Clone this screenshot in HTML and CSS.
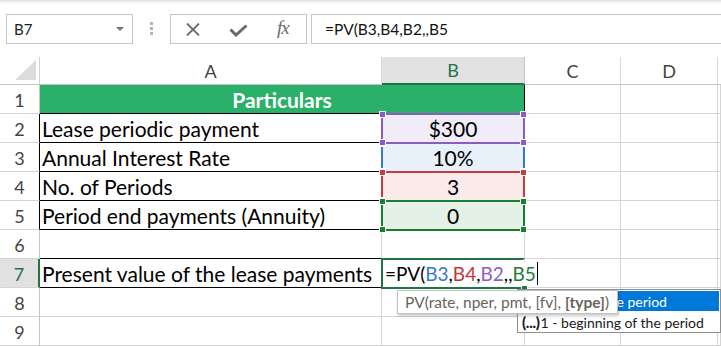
FILE: index.html
```html
<!DOCTYPE html>
<html>
<head>
<meta charset="utf-8">
<link rel="stylesheet" href="styles.css">
</head>
<body>
<div class="toolbar">
  <div class="namebox"><span>B7</span><span class="caret"></span></div>
  <div class="grip"><i></i><i></i><i></i></div>
  <div class="btns">
    <svg class="ico-x" width="14" height="13" viewBox="0 0 14 13"><path d="M1 0.5 L13 12.5 M13 0.5 L1 12.5" stroke="#6a6a6a" stroke-width="1.8" fill="none"/></svg>
    <svg class="ico-ok" width="19" height="13" viewBox="0 0 19 13"><path d="M1.5 5.5 L7 11 L17.5 1.5" stroke="#6a6a6a" stroke-width="3" fill="none"/></svg>
    <span class="fx">fx</span>
  </div>
  <div class="formula">=PV(B3,B4,B2,,B5</div>
</div>

<div class="sheet">
  <!-- header -->
  <div class="corner"><div class="tri"></div></div>
  <div class="ch">A</div>
  <div class="ch sel">B</div>
  <div class="ch">C</div>
  <div class="ch">D</div>
  <div class="ch end"></div>

  <!-- row 1 -->
  <div class="rh">1</div>
  <div class="c title">Particulars</div>
  <div class="c"></div><div class="c"></div><div class="c"></div>

  <!-- row 2 -->
  <div class="rh k">2</div>
  <div class="c a kb">Lease periodic payment</div>
  <div class="c b kb bg-purple">$300</div>
  <div class="c"></div><div class="c"></div><div class="c"></div>

  <!-- row 3 -->
  <div class="rh k">3</div>
  <div class="c a kb">Annual Interest Rate</div>
  <div class="c b kb bg-blue">10%</div>
  <div class="c"></div><div class="c"></div><div class="c"></div>

  <!-- row 4 -->
  <div class="rh k">4</div>
  <div class="c a kb">No. of Periods</div>
  <div class="c b kb bg-red">3</div>
  <div class="c"></div><div class="c"></div><div class="c"></div>

  <!-- row 5 -->
  <div class="rh k">5</div>
  <div class="c a kb">Period end payments (Annuity)</div>
  <div class="c b kb bg-green">0</div>
  <div class="c"></div><div class="c"></div><div class="c"></div>

  <!-- row 6 -->
  <div class="rh">6</div>
  <div class="c a kb"></div>
  <div class="c"></div>
  <div class="c"></div><div class="c"></div><div class="c"></div>

  <!-- row 7 -->
  <div class="rh sel">7</div>
  <div class="c a kb">Present value of the lease payments</div>
  <div class="c edit"><span class="edit-text">=PV(<span class="t-blue">B3</span>,<span class="t-red">B4</span>,<span class="t-purple">B2</span>,,<span class="t-green">B5</span><span class="cursor"></span></span></div>
  <div class="c"></div><div class="c"></div><div class="c"></div>

  <!-- row 8 -->
  <div class="rh">8</div>
  <div class="c"></div><div class="c"></div><div class="c"></div><div class="c"></div><div class="c"></div>

  <!-- row 9 -->
  <div class="rh">9</div>
  <div class="c"></div><div class="c"></div><div class="c"></div><div class="c"></div><div class="c"></div>

  <!-- reference highlights (overlay the grid areas) -->
  <div class="ref r-blue"><i class="h tl"></i><i class="h tr"></i><i class="h bl"></i><i class="h br"></i></div>
  <div class="ref r-purple"><i class="h tl"></i><i class="h tr"></i><i class="h bl"></i><i class="h br"></i></div>
  <div class="ref r-red"><i class="h tl"></i><i class="h tr"></i><i class="h bl"></i><i class="h br"></i></div>
  <div class="ref r-green"><i class="h tl"></i><i class="h tr"></i><i class="h bl"></i><i class="h br"></i></div>
  <div class="active"><i class="fill"></i></div>

  <div class="dropdown">
    <div class="item on"><span class="argicon">(...)</span>0 - end of the period</div>
    <div class="item"><span class="argicon">(...)</span>1 - beginning of the period</div>
  </div>
  <div class="tip">PV(rate, nper, pmt, [fv], <b>[type]</b>)</div>
</div>
</body>
</html>
```

FILE: styles.css
```css
* { box-sizing: border-box; }

body {
  margin: 0;
  width: 721px;
  height: 346px;
  overflow: hidden;
  background: #fff;
  font-family: Lato, "Noto Sans", "Liberation Sans", sans-serif;
  color: #000;
}

/* ---------- formula bar ---------- */
.toolbar {
  height: 57px;
  padding-top: 14px;
  display: flex;
  align-items: flex-start;
  background: linear-gradient(to bottom, #dcdcdc 0, #f3f3f3 2px, #fff 5px);
}

.namebox {
  margin-left: 6px;
  width: 127px;
  height: 30px;
  border: 1px solid #c6c6c6;
  background: #fff;
  display: flex;
  align-items: center;
  justify-content: space-between;
  padding: 0 8px 0 7px;
  font-size: 15px;
  color: #222;
}

.caret {
  width: 0;
  height: 0;
  border-left: 4px solid transparent;
  border-right: 4px solid transparent;
  border-top: 4px solid #777;
}

.grip {
  width: 37px;
  height: 30px;
  display: flex;
  flex-direction: column;
  align-items: center;
  gap: 2px;
  padding-top: 8px;
}
.grip i {
  display: block;
  width: 3px;
  height: 3px;
  background: #b3b3b3;
}

.btns {
  width: 137px;
  height: 30px;
  border: 1px solid #c6c6c6;
  display: flex;
  align-items: center;
  padding-left: 15px;
}
.ico-ok { margin-left: 29px; margin-top: 2px; }
.fx {
  margin-left: 29px;
  font-family: "Liberation Serif", "DejaVu Serif", serif;
  font-style: italic;
  font-size: 19px;
  color: #6a6a6a;
  letter-spacing: -1px;
  margin-top: -3px;
}

.formula {
  margin-left: 4px;
  flex: 1;
  height: 30px;
  border: 1px solid #c6c6c6;
  border-right: none;
  display: flex;
  align-items: center;
  padding-left: 13px;
  font-size: 15.5px;
  color: #111;
}

/* ---------- sheet grid ---------- */
.sheet {
  position: relative;
  display: grid;
  grid-template-columns: 40px 342px 143px 96px 97px 1fr;
  grid-template-rows: 28px repeat(9, 29px);
}

.corner {
  border-right: 1px solid #d0d0d0;
  border-bottom: 1px solid #c4c4c4;
  display: flex;
  justify-content: flex-end;
  align-items: flex-end;
  padding: 0 3px 4px 0;
}
.tri {
  width: 21px;
  height: 20px;
  background: #dcdcdc;
  clip-path: polygon(100% 0, 100% 100%, 0 100%);
}

.ch {
  border-right: 1px solid #d9d9d9;
  border-bottom: 1px solid #c4c4c4;
  display: flex;
  align-items: center;
  justify-content: center;
  font-size: 18px;
  color: #444;
}
.ch.sel {
  background: #e1e1e1;
  color: #217346;
  border-bottom: 2px solid #217346;
  border-right-color: #c8c8c8;
}
.ch.end { border-right: none; }

.rh {
  border-right: 1px solid #c4c4c4;
  border-bottom: 1px solid #d4d4d4;
  display: flex;
  align-items: center;
  justify-content: center;
  font-size: 18px;
  color: #444;
  padding-top: 1px;
}
.rh.k { border-right-color: #000; }
.rh.sel {
  background: #e1e1e1;
  color: #217346;
  border-right: 2px solid #217346;
}

.c {
  border-right: 1px solid #d4d4d4;
  border-bottom: 1px solid #d4d4d4;
  display: flex;
  align-items: center;
  white-space: nowrap;
  font-size: 21px;
  padding-top: 1px;
}
.c.a { padding-left: 2px; }
.c.b { justify-content: center; }
.kb { border-bottom-color: #000; }

.title {
  grid-column: span 2;
  background: #2ab068;
  color: #fff;
  font-weight: bold;
  justify-content: center;
  border-bottom-color: #000;
  border-right-color: #000;
}

.bg-purple { background: #f0ecf8; }
.bg-blue { background: #e8f0fa; }
.bg-red { background: #faeaea; }
.bg-green { background: #e4f1e6; }

.edit { padding-left: 3px; position: relative; z-index: 1; font-size: 19px; }
.edit-text {
  background: #fff;
  display: inline-flex;
  align-items: center;
  padding-right: 1px;
}
.t-blue { color: #3b78cc; }
.t-red { color: #c8343c; }
.t-purple { color: #8d5cc6; }
.t-green { color: #1e7d35; }
.cursor {
  display: inline-block;
  width: 1px;
  height: 23px;
  background: #000;
  margin-left: 1px;
}

/* ---------- reference highlights ---------- */
.ref, .active {
  position: absolute;
  grid-column: 3 / 4;
  top: -1px;
  bottom: -1px;
  left: -1px;
  right: 0;
  border: 2px solid;
}
.r-purple { grid-row: 3 / 4; border-color: #8a5cc0; z-index: 2; }
.r-blue   { grid-row: 4 / 5; border-color: #3c76c8; z-index: 1; }
.r-red    { grid-row: 5 / 6; border-color: #c73b43; z-index: 2; }
.r-green  { grid-row: 6 / 7; border-color: #17802f; z-index: 3; }

.h {
  position: absolute;
  width: 7px;
  height: 7px;
  border: 1px solid #fff;
}
.r-purple .h { background: #8a5cc0; }
.r-blue .h { background: #3c76c8; }
.r-red .h { background: #c73b43; }
.r-green .h { background: #17802f; }
.h.tl { top: -4px; left: -4px; }
.h.tr { top: -4px; right: -4px; }
.h.bl { bottom: -4px; left: -4px; }
.h.br { bottom: -4px; right: -4px; }

.active {
  grid-row: 8 / 9;
  border-color: #217346;
  border-right-color: transparent;
  z-index: 2;
}
.fill {
  position: absolute;
  right: -5px;
  bottom: -5px;
  width: 7px;
  height: 7px;
  background: #217346;
  border: 1px solid #fff;
}

/* ---------- autocomplete ---------- */
.dropdown {
  position: absolute;
  left: 517px;
  top: 232px;
  width: 204px;
  height: 44px;
  border: 1px solid #8f8f8f;
  background: #fff;
  padding: 1px;
  font-size: 14px;
  z-index: 5;
}
.item {
  height: 20px;
  display: flex;
  align-items: center;
  padding-left: 3px;
  color: #1a1a1a;
  white-space: nowrap;
}
.item.on { background: #0078d7; color: #fff; margin-bottom: 1px; }
.argicon { font-weight: 900; font-size: 15px; letter-spacing: -0.3px; margin-right: 1px; }

.tip {
  position: absolute;
  left: 397px;
  top: 233px;
  width: 221px;
  height: 24px;
  border: 1px solid #c2c2c2;
  background: #fff;
  box-shadow: 1px 2px 3px rgba(0, 0, 0, 0.22);
  padding-left: 7px;
  display: flex;
  align-items: center;
  font-size: 15.5px;
  color: #6b625a;
  white-space: nowrap;
  z-index: 6;
}
.tip b { font-weight: bold; margin-left: 4px; }
```
